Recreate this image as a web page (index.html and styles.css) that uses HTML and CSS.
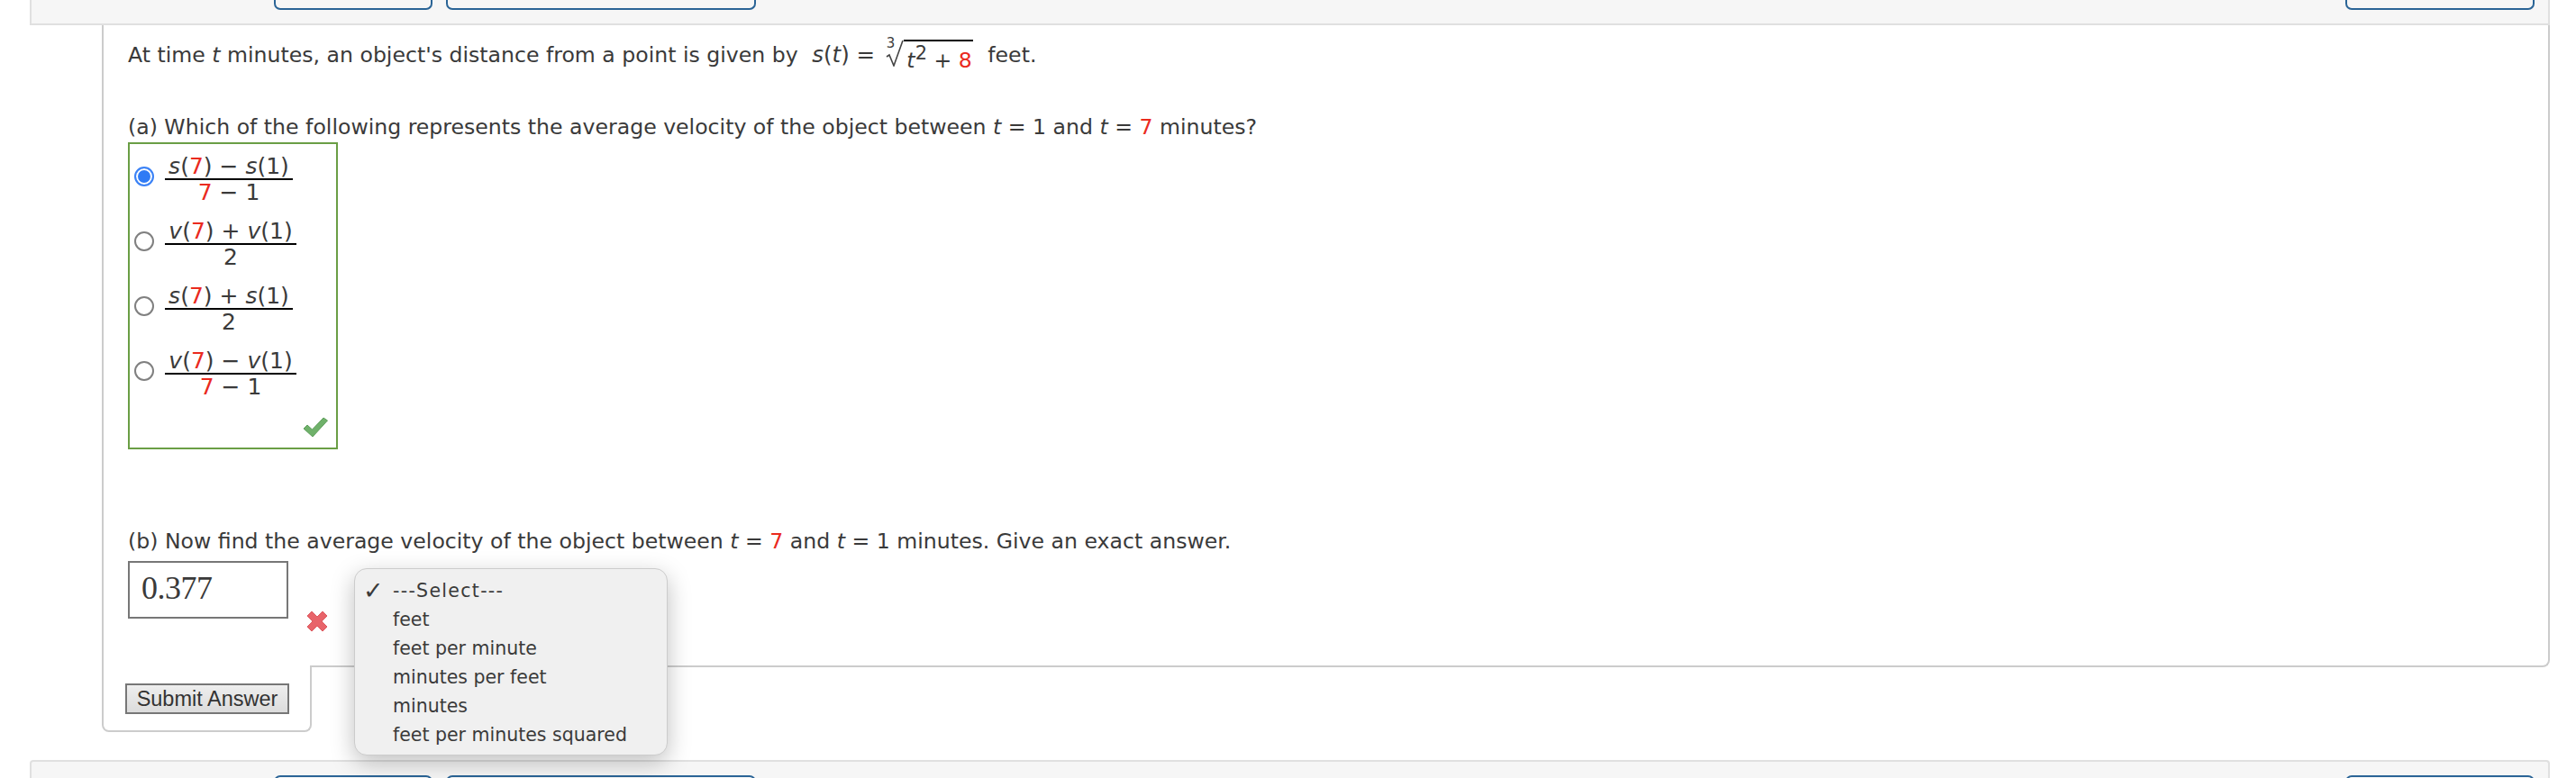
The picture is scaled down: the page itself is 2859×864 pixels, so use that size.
FILE: index.html
```html
<!DOCTYPE html>
<html lang="en">
<head>
    <meta charset="UTF-8">
    <title>Average velocity</title>
    <link rel="stylesheet" href="styles.css">
</head>
<body>
    <div class="page">
        <div class="nav-bar top">
            <span class="nav-btn first"></span>
            <span class="nav-btn second"></span>
            <span class="nav-btn last"></span>
        </div>

        <div class="panel">
            <p class="question intro">At time <i>t</i> minutes, an object's distance from a point is given by <span class="math"><i>s</i>(<i>t</i>) = <span class="root"><sup class="index">3</sup><svg class="radical" width="20" height="30" viewBox="0 0 20 30"><path d="M1 19 L4 17 L9 29 L19 1" fill="none" stroke="#444" stroke-width="1.6"/></svg><span class="radicand"><i>t</i><sup>2</sup> + <span class="red">8</span></span></span></span> feet.</p>

            <p class="question part-a">(a) Which of the following represents the average velocity of the object between <i>t</i> = 1 and <i>t</i> = <span class="red">7</span> minutes?</p>

            <div class="choices">
                <label class="choice">
                    <span class="radio checked"></span>
                    <span class="frac short">
                        <span class="num"><i>s</i>(<span class="red">7</span>) &minus; <i>s</i>(1)</span>
                        <span class="den"><span class="red">7</span> &minus; 1</span>
                    </span>
                </label>
                <label class="choice">
                    <span class="radio"></span>
                    <span class="frac">
                        <span class="num"><i>v</i>(<span class="red">7</span>) + <i>v</i>(1)</span>
                        <span class="den">2</span>
                    </span>
                </label>
                <label class="choice">
                    <span class="radio"></span>
                    <span class="frac short">
                        <span class="num"><i>s</i>(<span class="red">7</span>) + <i>s</i>(1)</span>
                        <span class="den">2</span>
                    </span>
                </label>
                <label class="choice">
                    <span class="radio"></span>
                    <span class="frac">
                        <span class="num"><i>v</i>(<span class="red">7</span>) &minus; <i>v</i>(1)</span>
                        <span class="den"><span class="red">7</span> &minus; 1</span>
                    </span>
                </label>
                <svg class="check-mark" width="28" height="23" viewBox="0 0 28 23">
                    <path d="M1 13 L5 9 L10.5 14 L23 1 L27.5 4 L11 22 Z" fill="#6fb16a" stroke="#5f9f5c" stroke-width="1"/>
                </svg>
            </div>

            <p class="question part-b">(b) Now find the average velocity of the object between <i>t</i> = <span class="red">7</span> and <i>t</i> = 1 minutes. Give an exact answer.</p>

            <div class="answer-row">
                <div class="answer-box">0.377</div>
                <svg class="x-mark" width="24" height="24" viewBox="0 0 24 24">
                    <path d="M6 1 L12 7 L18 1 L23 6 L17 12 L23 18 L18 23 L12 17 L6 23 L1 18 L7 12 L1 6 Z" fill="#e8646a" stroke="#dd5a60" stroke-width="1"/>
                </svg>
            </div>
        </div>

        <div class="submit-tab">
            <button class="submit-btn">Submit Answer</button>
        </div>

        <div class="nav-bar bottom">
            <span class="nav-btn first"></span>
            <span class="nav-btn second"></span>
            <span class="nav-btn last"></span>
        </div>

        <ul class="unit-menu">
            <li class="selected">---Select---</li>
            <li>feet</li>
            <li>feet per minute</li>
            <li>minutes per feet</li>
            <li>minutes</li>
            <li>feet per minutes squared</li>
        </ul>
    </div>
</body>
</html>
```

FILE: styles.css
```css
* {
    box-sizing: border-box;
}

html, body {
    margin: 0;
    height: 864px;
    overflow: hidden;
    background: #fff;
}

.page {
    position: relative;
    height: 864px;
    font-family: "DejaVu Sans", Verdana, sans-serif;
    font-size: 23.6px;
    color: #3a3a3a;
}

.red {
    color: #ea2a1e;
}

/* nav bars above and below the question */
.nav-bar {
    display: flex;
    width: 2797px;
    margin-left: 33px;
    padding-left: 269px;
    background: #f6f6f6;
    border: 2px solid #e0e0e0;
}

.nav-bar.top {
    height: 28px;
    border-top: none;
}

.nav-bar.bottom {
    height: 20px;
    margin-top: 31px;
    padding-top: 15px;
    border-bottom: none;
    border-radius: 4px 4px 0 0;
}

.nav-btn {
    display: block;
    height: 11px;
    border: 2px solid #2a6496;
}

.nav-bar.top .nav-btn {
    border-top: none;
    border-radius: 0 0 7px 7px;
}

.nav-bar.bottom .nav-btn {
    border-bottom: none;
    border-radius: 7px 7px 0 0;
}

.nav-btn.first {
    width: 176px;
    margin-right: 15px;
}

.nav-btn.second {
    width: 344px;
}

.nav-btn.last {
    width: 210px;
    margin-left: auto;
    margin-right: 15px;
}

/* main question panel */
.panel {
    width: 2717px;
    height: 713px;
    margin-left: 113px;
    padding: 0 0 0 27px;
    border: 2px solid #ccc;
    border-top: none;
    border-radius: 0 0 8px 0;
}

.question {
    margin: 0;
    line-height: 30px;
    white-space: nowrap;
}

.intro {
    height: 98px;
    padding-top: 16px;
}

.math {
    margin-left: 8px;
    margin-right: 9px;
    font-size: 24.5px;
}

.root {
    display: inline-flex;
    margin-left: 5px;
    vertical-align: -6px;
}

.index {
    align-self: flex-start;
    font-size: 15px;
    line-height: 15px;
    margin-top: -3px;
    margin-right: -10px;
}

.radical {
    align-self: flex-start;
}

.radicand {
    align-self: baseline;
    padding: 0 1px 0 3px;
    border-top: 2px solid #000;
    font-size: 23.6px;
    line-height: 43px;
}

.radicand sup {
    font-size: 21px;
    line-height: 0;
}

/* radio choices */
.choices {
    position: relative;
    width: 233px;
    height: 341px;
    margin-top: 2px;
    padding: 1px 0 0 5px;
    border: 2px solid #6a9e45;
}

.choice {
    display: flex;
    align-items: center;
    height: 72px;
    gap: 12px;
}

.radio {
    width: 22px;
    height: 22px;
    border: 2px solid #808080;
    border-radius: 50%;
    background: #fff;
    margin-top: -2px;
}

.radio.checked {
    border: 2px solid #3b82f6;
    box-shadow: inset 0 0 0 2px #fff, inset 0 0 0 9px #2f7bf5;
}

.frac {
    display: flex;
    flex-direction: column;
    width: 146px;
    margin-top: 2px;
    font-size: 25px;
    text-align: center;
    white-space: nowrap;
}

.frac.short {
    width: 142px;
}

.num {
    padding-top: 3px;
    line-height: 27px;
    border-bottom: 2px solid #000;
}

.den {
    line-height: 28px;
}

.check-mark {
    position: absolute;
    right: 9px;
    bottom: 11px;
}

.part-b {
    margin-top: 87px;
}

/* answer row */
.answer-row {
    display: flex;
    align-items: flex-start;
    margin-top: 7px;
}

.answer-box {
    width: 178px;
    height: 64px;
    padding: 6px 0 0 13px;
    border: 2px solid #777;
    font-family: "Liberation Serif", serif;
    font-size: 36px;
    line-height: 44px;
    letter-spacing: -0.5px;
}

.x-mark {
    margin: 55px 0 0 20px;
}

/* tab holding the submit button, hangs below the panel */
.submit-tab {
    position: relative;
    width: 233px;
    height: 74px;
    margin: -2px 0 0 113px;
    padding: 20px 0 0 24px;
    background: #fff;
    border: 2px solid #ccc;
    border-top: none;
    border-radius: 0 0 8px 8px;
}

.submit-btn {
    display: block;
    width: 182px;
    height: 34px;
    padding: 0;
    border: 2px solid #777;
    background: linear-gradient(#eee, #dcdcdc);
    font-family: "Liberation Sans", Arial, sans-serif;
    font-size: 23.5px;
    color: #333;
}

/* open native select menu */
.unit-menu {
    position: absolute;
    left: 393px;
    top: 631px;
    width: 348px;
    height: 208px;
    margin: 0;
    padding: 8px 0;
    list-style: none;
    background: #f0f0f0;
    border: 1px solid #ccc;
    border-radius: 14px;
    box-shadow: 0 8px 26px rgba(0, 0, 0, 0.25);
    font-family: "DejaVu Sans", sans-serif;
    font-size: 20.5px;
    color: #3a3a3a;
}

.unit-menu li {
    height: 32px;
    line-height: 32px;
    padding-left: 42px;
    white-space: nowrap;
}

.unit-menu li.selected {
    position: relative;
    letter-spacing: 1.3px;
}

.unit-menu li.selected::before {
    content: "\2713";
    position: absolute;
    left: 9px;
    font-size: 27px;
}
```
